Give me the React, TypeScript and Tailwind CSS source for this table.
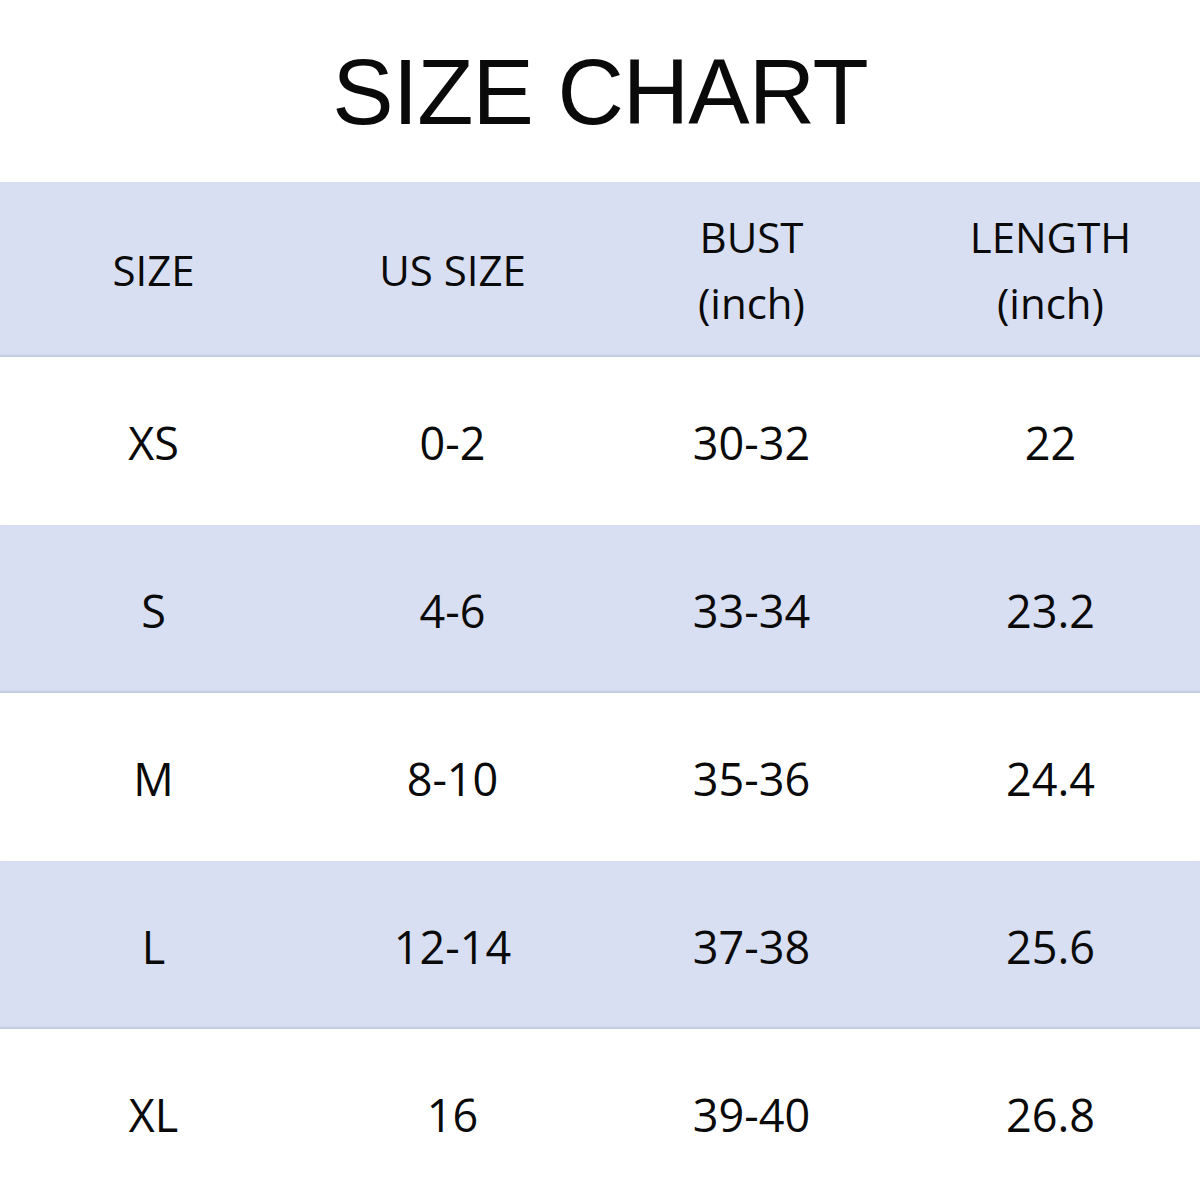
import React from "react";

const rows = [
  ["XS", "0-2", "30-32", "22"],
  ["S", "4-6", "33-34", "23.2"],
  ["M", "8-10", "35-36", "24.4"],
  ["L", "12-14", "37-38", "25.6"],
  ["XL", "16", "39-40", "26.8"],
];

export default function App() {
  return (
    <div className="w-[1200px] h-[1200px] bg-white text-[#0a0a0a] overflow-hidden font-['Open_Sans',sans-serif]">
      <div className="h-[182px] flex items-center justify-center">
        <h1 className="text-[92px] leading-none tracking-[-1px] pt-[2px] font-['Liberation_Sans',Arial,sans-serif]">
          SIZE CHART
        </h1>
      </div>
      <div className="h-[175px] pl-[4px] bg-[#d9dff2] grid grid-cols-4 items-center text-center text-[42px] leading-[66px] shadow-[inset_0_-3px_2px_-1px_rgba(150,160,190,0.35)]">
        <div>SIZE</div>
        <div>US SIZE</div>
        <div>
          BUST
          <br />
          (inch)
        </div>
        <div>
          LENGTH
          <br />
          (inch)
        </div>
      </div>
      {rows.map((r, i) => (
        <div
          key={r[0]}
          className={
            i % 2 === 1
              ? "h-[168px] pl-[4px] pt-[3px] bg-[#d9dff2] grid grid-cols-4 items-center text-center text-[45px] shadow-[inset_0_-3px_2px_-1px_rgba(150,160,190,0.35)]"
              : "h-[168px] pl-[4px] pt-[3px] bg-white grid grid-cols-4 items-center text-center text-[45px]"
          }
        >
          {r.map((c, j) => (
            <div key={j}>{c}</div>
          ))}
        </div>
      ))}
    </div>
  );
}
